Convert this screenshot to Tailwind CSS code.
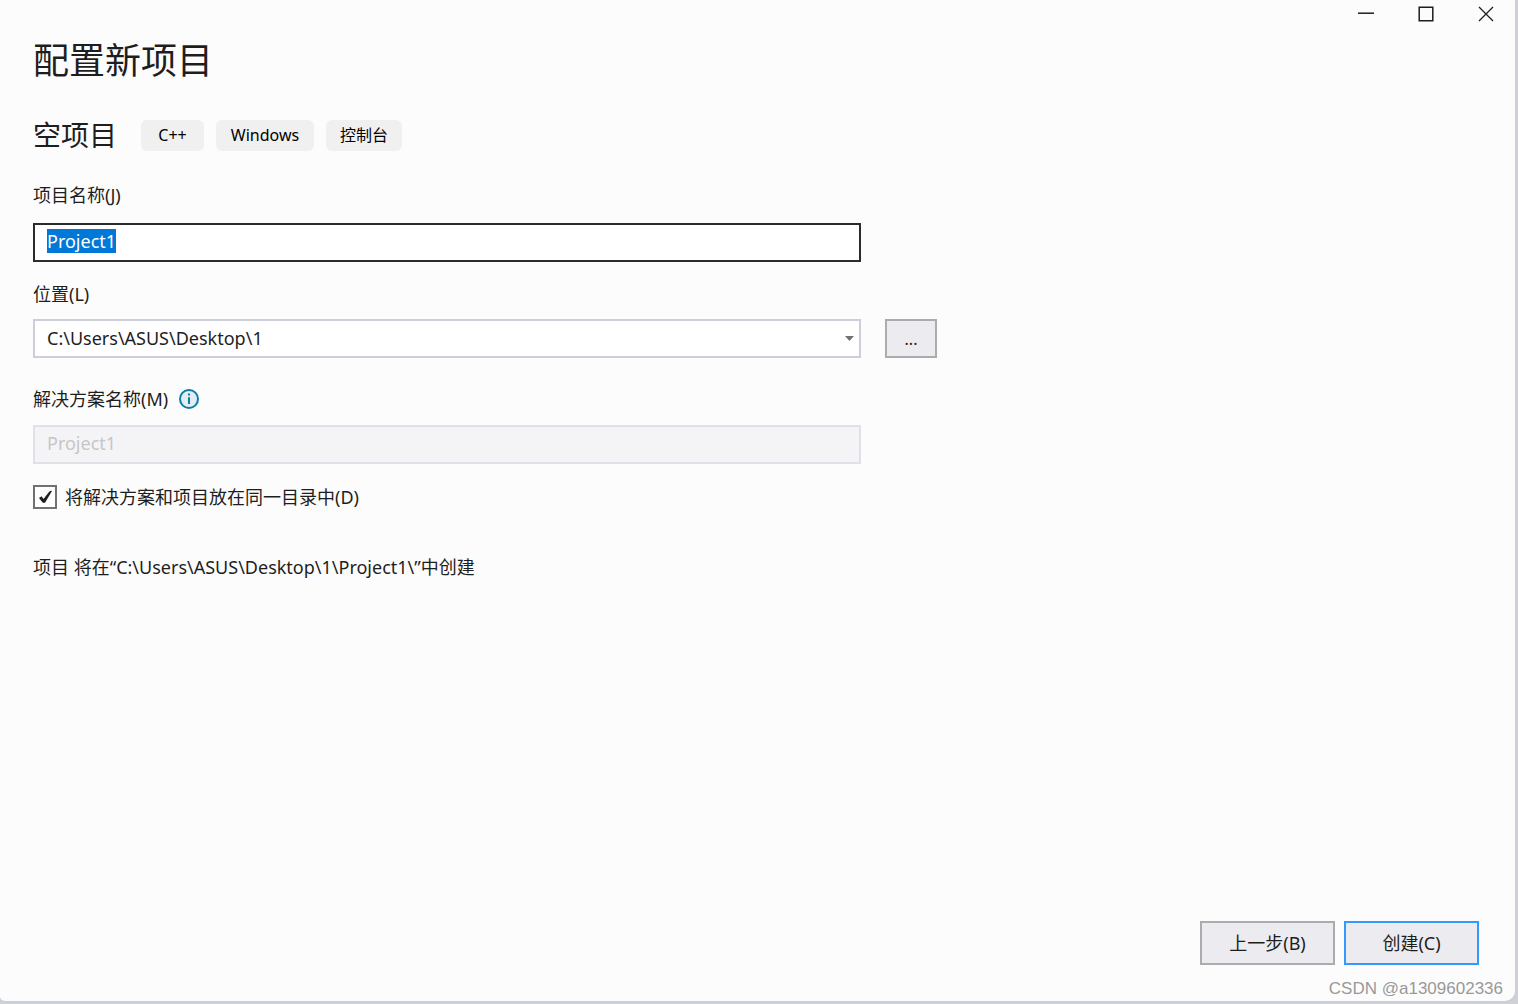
<!DOCTYPE html>
<html lang="zh-CN">
<head>
<meta charset="utf-8">
<meta name="viewport" content="width=device-width, initial-scale=1">
<title>配置新项目</title>
<script src="https://cdn.jsdelivr.net/npm/@tailwindcss/browser@4"></script>
</head>
<body class="bg-[#d0d1d6] font-['Noto_Sans','Noto_Sans_CJK_SC',sans-serif] text-lg leading-6 text-[#1e1e1e]">
<div class="flex min-h-screen flex-col pr-px pb-px">
  <main class="relative flex grow flex-col rounded-br-xl rounded-bl-md border-r-2 border-b-2 border-[#ccceda] bg-[#fcfcfc]">
    <div class="absolute top-0 -right-px flex">
      <button type="button" aria-label="最小化" class="flex h-7 w-15 items-center justify-center">
        <svg class="size-4" viewBox="0 0 16 16" fill="none" stroke="#1e1e1e" stroke-width="1.5"><path d="M0 7.2H16"/></svg>
      </button>
      <button type="button" aria-label="最大化" class="flex h-7 w-15 items-center justify-center">
        <svg class="size-4" viewBox="0 0 16 16" fill="none" stroke="#1e1e1e" stroke-width="1.5"><path d="M1.2 1.2H14.8V14.8H1.2Z"/></svg>
      </button>
      <button type="button" aria-label="关闭" class="flex h-7 w-15 items-center justify-center">
        <svg class="size-4" viewBox="0 0 16 16" fill="none" stroke="#1e1e1e" stroke-width="1.3"><path d="M1 1L15 15M15 1L1 15"/></svg>
      </button>
    </div>

    <form class="flex grow flex-col pr-9 pb-9 pl-[33px] pt-[37px]">
      <h1 class="text-4xl leading-12">配置新项目</h1>
      <div class="mt-[30px] flex items-center">
        <h2 class="text-[28px] leading-10">空项目</h2>
        <ul class="ml-6 flex gap-3 text-center text-base leading-[31px] text-black">
          <li class="min-w-[63px] rounded-md bg-[#f0f0f0] px-3">C++</li>
          <li class="min-w-[98px] rounded-md bg-[#f0f0f0] px-3">Windows</li>
          <li class="min-w-[76px] rounded-md bg-[#f0f0f0] px-3">控制台</li>
        </ul>
      </div>

      <label for="name" class="mt-7 self-start">项目名称(J)</label>
      <div class="mt-4 flex h-[39px] max-w-[828px] border-2 border-[#2b2b2e] bg-white px-3 py-1">
        <input id="name" type="text" value="Project1" class="h-6 w-full outline-none caret-transparent selection:bg-[#0078d7] selection:text-white">
      </div>

      <label for="location" class="mt-5 self-start">位置(L)</label>
      <div class="mt-[13px] flex gap-6">
        <div class="relative w-full max-w-[828px]">
          <select id="location" class="h-[39px] w-full appearance-none border-2 border-[#ccceda] bg-white px-3 pb-0.5 outline-none">
            <option>C:\Users\ASUS\Desktop\1</option>
          </select>
          <svg class="pointer-events-none absolute top-[17px] right-[7px] h-[5px] w-[9px]" viewBox="0 0 9 5" fill="#717171"><path d="M0 0H9L4.500 5Z"/></svg>
        </div>
        <button type="button" aria-label="浏览" class="h-[39px] w-13 shrink-0 border-2 border-[#acacac] bg-[#ececf0] text-base">...</button>
      </div>

      <div class="mt-[29px] flex items-center gap-[11px]">
        <label for="solution">解决方案名称(M)</label>
        <svg class="size-5" viewBox="0 0 20 20" role="img" aria-label="信息"><circle cx="10" cy="10" r="9" fill="#e2eef2" stroke="#0a7ea8" stroke-width="2"/><path d="M9 4.500H11V6.500H9ZM9 8.200H11V15H9Z" fill="#0a7ea8"/></svg>
      </div>
      <input id="solution" type="text" value="Project1" disabled class="mt-3.5 h-[39px] w-full max-w-[828px] border-2 border-[#e0e0e8] bg-[#f4f4f6] px-3 pb-1 text-[#c6c6c8]">

      <div class="mt-[21px] flex items-center gap-2">
        <span class="grid size-6">
          <input id="same" type="checkbox" checked class="col-start-1 row-start-1 size-6 appearance-none border-2 border-[#717171] bg-white">
          <svg class="pointer-events-none col-start-1 row-start-1 size-6" viewBox="0 0 24 24" fill="#1e1e1e"><path d="M6 13L8.500 11.300L10.500 14L16.200 6.700Q17.600 5.500 19 6L12 17.800H9.800Z"/></svg>
        </span>
        <label for="same">将解决方案和项目放在同一目录中(D)</label>
      </div>

      <p class="mt-[46px]">项目 将在“C:\Users\ASUS\Desktop\1\Project1\”中创建</p>

      <div class="mt-auto flex justify-end gap-[9px]">
        <button type="button" class="h-11 w-[135px] border-2 border-[#acacac] bg-[#ececf0]">上一步(B)</button>
        <button type="submit" class="h-11 w-[135px] border-2 border-[#3399ff] bg-[#ececf0]">创建(C)</button>
      </div>
    </form>
    <span class="absolute right-3 bottom-0.5 font-['Liberation_Sans',sans-serif] text-[17px] leading-5 text-[#999999]">CSDN @a1309602336</span>
  </main>
</div>
<script>
  const nameBox = document.getElementById('name');
  nameBox.focus();
  nameBox.select();
</script>
</body>
</html>
